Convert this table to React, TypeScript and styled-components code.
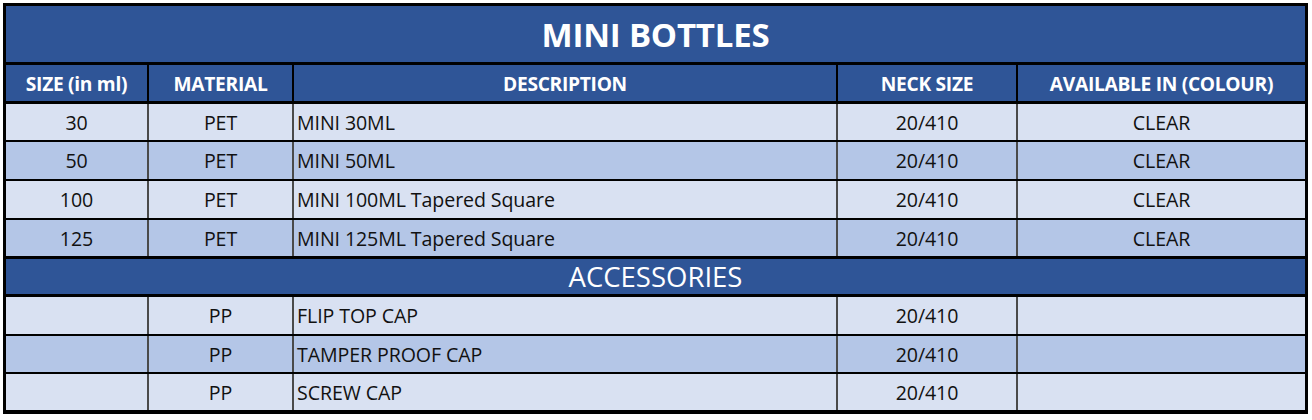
import React from "react";
import styled, { createGlobalStyle } from "styled-components";

const Global = createGlobalStyle`
  html, body { margin: 0; padding: 0; background: #ffffff; }
  body { font-family: "Open Sans", "Liberation Sans", sans-serif; }
`;

const Page = styled.div`
  padding: 3px 0 0 3px;
`;

const Table = styled.div`
  width: 1299px;
  border: 3px solid #000;
  border-bottom-width: 4px;
  background: #d9e1f2;
`;

const Band = styled.div<{ $h: number; $size: number; $bold?: boolean }>`
  height: ${(p) => p.$h}px;
  background: #2f5597;
  color: #fff;
  display: flex;
  align-items: center;
  justify-content: center;
  font-size: ${(p) => p.$size}px;
  font-weight: ${(p) => (p.$bold ? 700 : 400)};
  border-bottom: 3px solid #000;
  letter-spacing: ${(p) => (p.$bold ? "-0.2px" : "0")};
`;

const Row = styled.div<{ $h: number; $bg: string; $line: number }>`
  display: grid;
  grid-template-columns: 141px 145px 544px 180px 289px;
  height: ${(p) => p.$h}px;
  background: ${(p) => p.$bg};
  border-bottom: ${(p) => p.$line}px solid #000;
`;

const Cell = styled.div<{ $left?: boolean; $first?: boolean; $head?: boolean }>`
  display: flex;
  align-items: center;
  justify-content: ${(p) => (p.$left ? "flex-start" : "center")};
  padding-left: ${(p) => (p.$left ? "3px" : "0")};
  border-left: ${(p) => (p.$first ? "none" : `2px solid ${p.$head ? "#000" : "#4a4a4a"}`)};
  font-size: ${(p) => (p.$head ? "19.2px" : "19.6px")};
  font-weight: ${(p) => (p.$head ? 700 : 400)};
  color: ${(p) => (p.$head ? "#fff" : "#111")};
  letter-spacing: ${(p) => (p.$head ? "-0.3px" : "-0.1px")};
  white-space: nowrap;
  overflow: hidden;
`;

type R = [string, string, string, string, string];

const headers: R = ["SIZE (in ml)", "MATERIAL", "DESCRIPTION", "NECK SIZE", "AVAILABLE IN (COLOUR)"];

const bottles: R[] = [
  ["30", "PET", "MINI 30ML", "20/410", "CLEAR"],
  ["50", "PET", "MINI 50ML", "20/410", "CLEAR"],
  ["100", "PET", "MINI 100ML Tapered Square", "20/410", "CLEAR"],
  ["125", "PET", "MINI 125ML Tapered Square", "20/410", "CLEAR"],
];

const accessories: R[] = [
  ["", "PP", "FLIP TOP CAP", "20/410", ""],
  ["", "PP", "TAMPER PROOF CAP", "20/410", ""],
  ["", "PP", "SCREW CAP", "20/410", ""],
];

const LIGHT = "#d9e1f2";
const MID = "#b4c6e7";

function DataRow({ r, h, bg, line }: { r: R; h: number; bg: string; line: number }) {
  return (
    <Row $h={h} $bg={bg} $line={line}>
      {r.map((v, i) => (
        <Cell key={i} $first={i === 0} $left={i === 2}>
          {v}
        </Cell>
      ))}
    </Row>
  );
}

export default function App() {
  const bh = [36, 37, 37, 36];
  const ah = [37, 36, 36];
  return (
    <>
      <Global />
      <Page>
        <Table>
          <Band $h={56} $size={33} $bold>
            MINI BOTTLES
          </Band>
          <Row $h={36} $bg="#2f5597" $line={3}>
            {headers.map((v, i) => (
              <Cell key={i} $head $first={i === 0}>
                {v}
              </Cell>
            ))}
          </Row>
          {bottles.map((r, i) => (
            <DataRow key={i} r={r} h={bh[i]} bg={i % 2 ? MID : LIGHT} line={i === bottles.length - 1 ? 3 : 2} />
          ))}
          <Band $h={35} $size={27.5}>
            ACCESSORIES
          </Band>
          {accessories.map((r, i) => (
            <DataRow key={i} r={r} h={ah[i]} bg={i % 2 ? MID : LIGHT} line={i === accessories.length - 1 ? 0 : 2} />
          ))}
        </Table>
      </Page>
    </>
  );
}
